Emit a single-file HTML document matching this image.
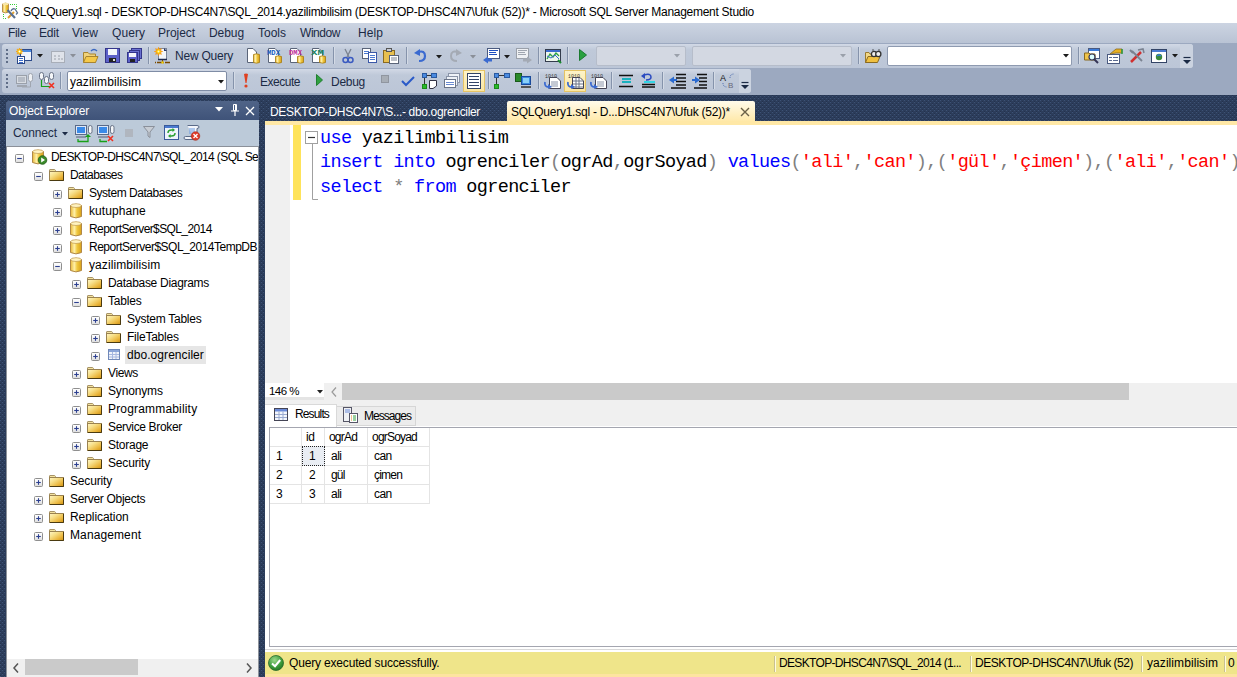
<!DOCTYPE html>
<html><head><meta charset="utf-8"><style>
*{margin:0;padding:0;box-sizing:border-box}
html,body{width:1237px;height:677px;overflow:hidden;background:#2b3b58;font-family:"Liberation Sans",sans-serif;font-size:12px;color:#000}
.a{position:absolute}
.t{position:absolute;white-space:pre;line-height:1.15}
svg{position:absolute;overflow:visible}
</style></head><body>
<svg width="0" height="0" style="position:absolute"><defs><linearGradient id="gfold" x1="0" y1="0" x2="1" y2="1"><stop offset="0" stop-color="#fff6c8"/><stop offset="0.35" stop-color="#f7df88"/><stop offset="0.7" stop-color="#ebb840"/><stop offset="1" stop-color="#cf9012"/></linearGradient><linearGradient id="gdb" x1="0" y1="0" x2="1" y2="0"><stop offset="0" stop-color="#e8b838"/><stop offset="0.35" stop-color="#fff0a8"/><stop offset="0.6" stop-color="#f0c840"/><stop offset="1" stop-color="#d8a018"/></linearGradient><linearGradient id="gbox" x1="0" y1="0" x2="0" y2="1"><stop offset="0" stop-color="#fff"/><stop offset="0.5" stop-color="#f4f4f4"/><stop offset="1" stop-color="#dadada"/></linearGradient><radialGradient id="gok" cx="0.4" cy="0.3" r="0.8"><stop offset="0" stop-color="#9ad88a"/><stop offset="0.6" stop-color="#3a9a3a"/><stop offset="1" stop-color="#1e6a1e"/></radialGradient></defs></svg>
<div class="a" style="left:0px;top:0px;width:1237px;height:23px;background:#fff"></div>
<svg style="left:0px;top:0px" width="20" height="20" viewBox="0 0 20 20"><path d="M10 4.5 H16.5 V10 M3.5 14 V18.5 H7" fill="none" stroke="#33cc33" stroke-width="1" stroke-dasharray="1 1"/><path d="M2.5 4 Q5.5 2.3 8.5 4 V12 Q5.5 13.7 2.5 12Z" fill="url(#gdb)" stroke="#b08848" stroke-width="0.9"/><ellipse cx="5.5" cy="4" rx="3" ry="1.2" fill="#f8e6a8"/><path d="M8 18 L14 12" stroke="#e0a030" stroke-width="2"/><path d="M7.5 10 L15 18" stroke="#5a7090" stroke-width="2.2"/><path d="M11 11 Q12 8 15 9 L17.5 13 L16 14.5" fill="none" stroke="#5a7090" stroke-width="1.3"/></svg>
<div class="t" style="left:23px;top:5.94px;font-size:12px;color:#000;letter-spacing:-0.275px;">SQLQuery1.sql - DESKTOP-DHSC4N7\SQL_2014.yazilimbilisim (DESKTOP-DHSC4N7\Ufuk (52))* - Microsoft SQL Server Management Studio</div>
<div class="a" style="left:0px;top:23px;width:1237px;height:20px;background:linear-gradient(#ccd4e2,#b9c3d4)"></div>
<div class="t" style="left:8px;top:26.94px;font-size:12px;color:#1b2a45;letter-spacing:-0.334px;">File</div>
<div class="t" style="left:39px;top:26.94px;font-size:12px;color:#1b2a45;letter-spacing:-0.169px;">Edit</div>
<div class="t" style="left:72px;top:26.94px;font-size:12px;color:#1b2a45;letter-spacing:0.052px;">View</div>
<div class="t" style="left:112px;top:26.94px;font-size:12px;color:#1b2a45;letter-spacing:0.065px;">Query</div>
<div class="t" style="left:158px;top:26.94px;font-size:12px;color:#1b2a45;letter-spacing:-0.049px;">Project</div>
<div class="t" style="left:209px;top:26.94px;font-size:12px;color:#1b2a45;letter-spacing:-0.072px;">Debug</div>
<div class="t" style="left:258px;top:26.94px;font-size:12px;color:#1b2a45;letter-spacing:-0.002px;">Tools</div>
<div class="t" style="left:300px;top:26.94px;font-size:12px;color:#1b2a45;letter-spacing:-0.446px;">Window</div>
<div class="t" style="left:358px;top:26.94px;font-size:12px;color:#1b2a45;letter-spacing:0.080px;">Help</div>
<div class="a" style="left:0px;top:43px;width:1237px;height:52px;background:#9ca9c0"></div>
<div class="a" style="left:2px;top:44px;width:1191px;height:24px;background:linear-gradient(#d2d9e6,#bfc9d9 25%,#bcc6d7);border-radius:3px"></div>
<div class="a" style="left:1180px;top:44px;width:13px;height:24px;background:#cbd3e0;border-radius:0 3px 3px 0"></div>
<div class="a" style="left:2px;top:69px;width:749px;height:24px;background:linear-gradient(#d2d9e6,#bfc9d9 25%,#bcc6d7);border-radius:3px"></div>
<div class="a" style="left:739px;top:69px;width:12px;height:24px;background:#cbd3e0;border-radius:0 3px 3px 0"></div>
<div class="a" style="left:6px;top:49px;width:2px;height:2px;background:#5f6d87"></div><div class="a" style="left:6px;top:53px;width:2px;height:2px;background:#5f6d87"></div><div class="a" style="left:6px;top:57px;width:2px;height:2px;background:#5f6d87"></div><div class="a" style="left:6px;top:61px;width:2px;height:2px;background:#5f6d87"></div>
<div class="a" style="left:6px;top:74px;width:2px;height:2px;background:#5f6d87"></div><div class="a" style="left:6px;top:78px;width:2px;height:2px;background:#5f6d87"></div><div class="a" style="left:6px;top:82px;width:2px;height:2px;background:#5f6d87"></div><div class="a" style="left:6px;top:86px;width:2px;height:2px;background:#5f6d87"></div>
<svg style="left:1183px;top:57px" width="8" height="8" viewBox="0 0 8 8"><path d="M0.5 0.5 H7.5" stroke="#1b2a45" stroke-width="1.2"/><path d="M0 3 H8 L4 7Z" fill="#1b2a45"/></svg>
<svg style="left:741px;top:82px" width="8" height="8" viewBox="0 0 8 8"><path d="M0.5 0.5 H7.5" stroke="#1b2a45" stroke-width="1.2"/><path d="M0 3 H8 L4 7Z" fill="#1b2a45"/></svg>
<svg style="left:16px;top:48px" width="17" height="17" viewBox="0 0 17 17"><rect x="4.5" y="1.5" width="11" height="11" fill="#eef3fb" stroke="#2c4a8a"/><rect x="5" y="2" width="10" height="2" fill="#4a8ae0"/><path d="M3.50 0.00 L4.11 2.02 L5.97 1.03 L4.98 2.89 L7.00 3.50 L4.98 4.11 L5.97 5.97 L4.11 4.98 L3.50 7.00 L2.89 4.98 L1.03 5.97 L2.02 4.11 L0.00 3.50 L2.02 2.89 L1.03 1.03 L2.89 2.02Z" fill="#ffd800" stroke="#f5a010" stroke-width="0.7"/><circle cx="3.5" cy="3.5" r="0.9" fill="#fff"/><rect x="1.5" y="8.5" width="7" height="7" fill="#fff" stroke="#2c4a8a"/><path d="M3 10.5 H7 M3 12.5 H7 M3 14.5 H7" stroke="#3a6ac8"/></svg><svg style="left:37px;top:54px" width="6" height="4" viewBox="0 0 6 4"><path d="M0 0 H6 L3 3.5Z" fill="#1b1b1b"/></svg><svg style="left:50px;top:48px" width="16" height="16" viewBox="0 0 16 16"><rect x="1.5" y="3.5" width="13" height="11" fill="#dfe3ea" stroke="#a8aeb8"/><path d="M4 8h2M8 8h2M4 11h2M8 11h2M11 11h2" stroke="#9aa0aa"/></svg><svg style="left:70px;top:54px" width="6" height="4" viewBox="0 0 6 4"><path d="M0 0 H6 L3 3.5Z" fill="#8a8f98"/></svg><svg style="left:82px;top:48px" width="17" height="16" viewBox="0 0 17 16"><path d="M1.5 4.5 H6 L7.5 6 H13.5 V14.5 H1.5Z" fill="#f0d27a" stroke="#a88430"/><path d="M1.5 14.5 L4 8.5 H16 L13.5 14.5Z" fill="#f5c94a" stroke="#a88430"/><path d="M9 3 Q12 0 15 3" fill="none" stroke="#3a68c0" stroke-width="1.3"/></svg><svg style="left:105px;top:48px" width="15" height="15" viewBox="0 0 15 15"><rect x="0.5" y="0.5" width="14" height="14" fill="#5c60c8" stroke="#34368a"/><rect x="3" y="1" width="9" height="6" fill="#f4f6fb"/><rect x="4" y="10" width="7" height="4" fill="#222"/><rect x="8" y="11" width="2" height="2" fill="#ddd"/></svg><svg style="left:127px;top:48px" width="15" height="15" viewBox="0 0 15 15"><rect x="4.5" y="0.5" width="10" height="10" fill="#6a70d0" stroke="#34368a"/><rect x="2.5" y="2.5" width="10" height="10" fill="#6a70d0" stroke="#34368a"/><rect x="0.5" y="4.5" width="10" height="10" fill="#5c60c8" stroke="#34368a"/><rect x="2" y="5" width="7" height="4" fill="#f4f6fb"/><rect x="3" y="11" width="5" height="3" fill="#222"/></svg><div class="a" style="left:148px;top:47px;width:1px;height:17px;background:#8593ab"></div><div class="a" style="left:149px;top:47px;width:1px;height:17px;background:#d4dbe6"></div><svg style="left:154px;top:47px" width="18" height="17" viewBox="0 0 18 17"><rect x="4.5" y="1.5" width="8" height="11" fill="#f4f6fa" stroke="#7a8498"/><path d="M4 12.5 H13" stroke="#1e2a50" stroke-width="1.5"/><path d="M10 1 L13 4 H10Z" fill="#2a3a68"/><path d="M4.50 0.50 L5.27 2.65 L7.33 1.67 L6.35 3.73 L8.50 4.50 L6.35 5.27 L7.33 7.33 L5.27 6.35 L4.50 8.50 L3.73 6.35 L1.67 7.33 L2.65 5.27 L0.50 4.50 L2.65 3.73 L1.67 1.67 L3.73 2.65Z" fill="#ffd000" stroke="#f59010" stroke-width="0.8"/><circle cx="4.5" cy="4.5" r="1" fill="#fff6c0"/><path d="M1 15.5 H17" stroke="#7a4a00" stroke-width="1.4" stroke-dasharray="1 1 5 1 1 1 5 1"/><path d="M8.5 13 V15" stroke="#7a4a00"/><circle cx="8.5" cy="15.5" r="1.2" fill="#f0d010"/></svg><div class="t" style="left:175px;top:50.44px;font-size:12px;color:#1b2a45;letter-spacing:-0.224px;">New Query</div><svg style="left:246px;top:48px" width="16" height="16" viewBox="0 0 16 16"><path d="M1.5 0.5 H7 L10.5 4 V14.5 H1.5Z" fill="#fff" stroke="#5a6478"/><path d="M7.5 6.5 Q10.5 5.2 13.5 6.5 V14.5 Q10.5 15.8 7.5 14.5Z" fill="url(#gdb)" stroke="#a57a10" stroke-width="0.8"/></svg><svg style="left:267px;top:48px" width="16" height="16" viewBox="0 0 16 16"><path d="M1.5 0.5 H8 L11.5 4 V14.5 H1.5Z" fill="#fff" stroke="#5a6478"/><text x="0" y="6.5" font-size="6.5" font-family="Liberation Mono" font-weight="bold" fill="#2060c0" textLength="13" lengthAdjust="spacingAndGlyphs">MDX</text><path d="M8.5 8.5 Q11.5 7.2 14.5 8.5 V14.5 Q11.5 15.8 8.5 14.5Z" fill="url(#gdb)" stroke="#a57a10" stroke-width="0.8"/></svg><svg style="left:289px;top:48px" width="16" height="16" viewBox="0 0 16 16"><path d="M1.5 0.5 H8 L11.5 4 V14.5 H1.5Z" fill="#fff" stroke="#5a6478"/><text x="0" y="6.5" font-size="6.5" font-family="Liberation Mono" font-weight="bold" fill="#c030a0" textLength="13" lengthAdjust="spacingAndGlyphs">DMX</text><path d="M8.5 8.5 Q11.5 7.2 14.5 8.5 V14.5 Q11.5 15.8 8.5 14.5Z" fill="url(#gdb)" stroke="#a57a10" stroke-width="0.8"/></svg><svg style="left:311px;top:48px" width="16" height="16" viewBox="0 0 16 16"><path d="M1.5 0.5 H8 L11.5 4 V14.5 H1.5Z" fill="#fff" stroke="#5a6478"/><text x="0" y="6.5" font-size="6.5" font-family="Liberation Mono" font-weight="bold" fill="#208060" textLength="13" lengthAdjust="spacingAndGlyphs">XM</text><path d="M8.5 8.5 Q11.5 7.2 14.5 8.5 V14.5 Q11.5 15.8 8.5 14.5Z" fill="url(#gdb)" stroke="#a57a10" stroke-width="0.8"/></svg><div class="a" style="left:333px;top:47px;width:1px;height:17px;background:#8593ab"></div><div class="a" style="left:334px;top:47px;width:1px;height:17px;background:#d4dbe6"></div><svg style="left:342px;top:48px" width="12" height="16" viewBox="0 0 12 16"><path d="M3 1 L7 9 M9 1 L5 9" stroke="#7a8290" stroke-width="1.3"/><circle cx="3.5" cy="12" r="2.5" fill="none" stroke="#3a5ac0" stroke-width="1.5"/><circle cx="8.5" cy="12" r="2.5" fill="none" stroke="#3a5ac0" stroke-width="1.5"/></svg><svg style="left:362px;top:48px" width="16" height="16" viewBox="0 0 16 16"><rect x="0.5" y="0.5" width="8" height="10" fill="#fff" stroke="#5a6478"/><path d="M2 3.5h5M2 5.5h4" stroke="#4a78d0"/><rect x="6.5" y="4.5" width="8" height="10" fill="#fff" stroke="#3a58a8"/><path d="M8 7.5h5M8 9.5h5M8 11.5h5" stroke="#4a78d0"/></svg><svg style="left:383px;top:48px" width="17" height="16" viewBox="0 0 17 16"><rect x="0.5" y="2.5" width="11" height="12" fill="#e8c050" stroke="#8a6a20"/><rect x="3.5" y="0.5" width="5" height="3" fill="#c8ccd4" stroke="#555"/><rect x="6.5" y="7.5" width="9" height="8" fill="#fff" stroke="#5a6478"/><path d="M8 10h6M8 12h6" stroke="#7a8290"/></svg><div class="a" style="left:406px;top:47px;width:1px;height:17px;background:#8593ab"></div><div class="a" style="left:407px;top:47px;width:1px;height:17px;background:#d4dbe6"></div><svg style="left:414px;top:49px" width="13" height="14" viewBox="0 0 13 14"><path d="M4 3 Q11 1 11 7 Q11 12 5 12" fill="none" stroke="#3a6ad0" stroke-width="2.2"/><path d="M0 4 L6 0 V7Z" fill="#3a6ad0"/></svg><svg style="left:436px;top:55px" width="6" height="4" viewBox="0 0 6 4"><path d="M0 0 H6 L3 3.5Z" fill="#1b1b1b"/></svg><svg style="left:449px;top:49px" width="13" height="14" viewBox="0 0 13 14"><path d="M9 3 Q2 1 2 7 Q2 12 8 12" fill="none" stroke="#a4aab4" stroke-width="2"/><path d="M13 4 L7 0 V7Z" fill="#a4aab4"/></svg><svg style="left:470px;top:55px" width="6" height="4" viewBox="0 0 6 4"><path d="M0 0 H6 L3 3.5Z" fill="#8a8f98"/></svg><svg style="left:483px;top:48px" width="17" height="16" viewBox="0 0 17 16"><rect x="4.5" y="0.5" width="12" height="10" fill="#fff" stroke="#4a5a80"/><path d="M6 2.5h9M6 4.5h7M6 6.5h8" stroke="#2050c0"/><path d="M0 12 L5 8.5 V10.5 H9 V13.5 H5 V15.5Z" fill="#3a6ad0"/></svg><svg style="left:504px;top:55px" width="6" height="4" viewBox="0 0 6 4"><path d="M0 0 H6 L3 3.5Z" fill="#1b1b1b"/></svg><svg style="left:516px;top:48px" width="17" height="16" viewBox="0 0 17 16"><rect x="0.5" y="0.5" width="12" height="10" fill="#eef0f3" stroke="#9aa0aa"/><path d="M2 2.5h9M2 4.5h7M2 6.5h8" stroke="#a0a6b0"/><path d="M16 12 L11 8.5 V10.5 H7 V13.5 H11 V15.5Z" fill="#a4aab4"/></svg><div class="a" style="left:538px;top:47px;width:1px;height:17px;background:#8593ab"></div><div class="a" style="left:539px;top:47px;width:1px;height:17px;background:#d4dbe6"></div><svg style="left:545px;top:48px" width="17" height="16" viewBox="0 0 17 16"><rect x="0.5" y="1.5" width="15" height="12" fill="#eef6ee" stroke="#333c4c"/><path d="M1 3h14" stroke="#3a6ad0" stroke-width="2"/><path d="M2 11 L5 6 L8 9 L11 5 L14 8" fill="none" stroke="#2aa040" stroke-width="1.3"/><path d="M2 8 L6 10 L10 7 L14 11" fill="none" stroke="#3a6ad0"/><path d="M13 12 L16 15" stroke="#1a8a30" stroke-width="2"/></svg><div class="a" style="left:567px;top:47px;width:1px;height:17px;background:#8593ab"></div><div class="a" style="left:568px;top:47px;width:1px;height:17px;background:#d4dbe6"></div><svg style="left:579px;top:49px" width="8" height="12" viewBox="0 0 8 12"><path d="M0.5 0.5 L7.5 6 L0.5 11.5Z" fill="#2aa040" stroke="#1a7a30"/></svg>
<div class="a" style="left:596px;top:46px;width:90px;height:20px;background:#d3d8e2;border:1px solid #b6bdca;border-radius:2px"></div>
<svg style="left:674px;top:54px" width="6" height="4" viewBox="0 0 6 4"><path d="M0 0 H6 L3 3.5Z" fill="#9aa0aa"/></svg>
<div class="a" style="left:692px;top:46px;width:160px;height:20px;background:#d3d8e2;border:1px solid #b6bdca;border-radius:2px"></div>
<svg style="left:840px;top:54px" width="6" height="4" viewBox="0 0 6 4"><path d="M0 0 H6 L3 3.5Z" fill="#9aa0aa"/></svg>
<div class="a" style="left:858px;top:47px;width:1px;height:17px;background:#8593ab"></div><div class="a" style="left:859px;top:47px;width:1px;height:17px;background:#d4dbe6"></div>
<svg style="left:865px;top:48px" width="16" height="16" viewBox="0 0 16 16"><path d="M0.5 4.5 H4 L5 6 H9 V14.5 H0.5Z" fill="#f2d888" stroke="#9a7a30"/><path d="M0.5 14.5 L3 8.5 H15 L12.5 14.5Z" fill="#f0c040" stroke="#8a6a20"/><circle cx="9" cy="6" r="2.6" fill="#eee" stroke="#333" stroke-width="1.3"/><circle cx="13.3" cy="6" r="2.6" fill="#eee" stroke="#333" stroke-width="1.3"/><path d="M8 2.5 V1.5 M14 2.5 V1.5" stroke="#333" stroke-width="1.5"/></svg>
<div class="a" style="left:887px;top:46px;width:185px;height:20px;background:#fff;border:1px solid #8e9ab0;border-radius:2px"></div>
<svg style="left:1063px;top:54px" width="6" height="4" viewBox="0 0 6 4"><path d="M0 0 H6 L3 3.5Z" fill="#1b1b1b"/></svg>
<div class="a" style="left:1078px;top:47px;width:1px;height:17px;background:#8593ab"></div><div class="a" style="left:1079px;top:47px;width:1px;height:17px;background:#d4dbe6"></div>
<svg style="left:1084px;top:48px" width="17" height="16" viewBox="0 0 17 16"><rect x="4.5" y="0.5" width="11" height="10" fill="#fff" stroke="#4a5a80"/><rect x="5" y="1" width="10" height="2" fill="#3a7ad8"/><path d="M0.5 5 H5 L6 6 H11 V12 H0.5Z" fill="#f0c44a" stroke="#8a6a20"/><circle cx="8" cy="9" r="3" fill="#dff" stroke="#335" stroke-width="1.2"/><path d="M10 11 L14 15" stroke="#335" stroke-width="2"/></svg>
<svg style="left:1107px;top:48px" width="16" height="16" viewBox="0 0 16 16"><rect x="0.5" y="6.5" width="12" height="9" fill="#fff" stroke="#4a5a80"/><path d="M2 9.5h3M6 9.5h5M2 12.5h3M6 12.5h5" stroke="#5a6a90"/><path d="M3 6 L9 1 H15 V5 H9Z" fill="#e8b020" stroke="#8a6a20" stroke-width="0.8"/><path d="M15 1 V6" stroke="#2a9a40" stroke-width="1.5"/></svg>
<svg style="left:1129px;top:48px" width="16" height="16" viewBox="0 0 16 16"><path d="M2 14 L12 4" stroke="#d03030" stroke-width="2.5"/><path d="M3 3 L13 13" stroke="#7a8290" stroke-width="1.8"/><path d="M9 2 L14 1 L15 5" fill="none" stroke="#7a8290" stroke-width="1.5"/><path d="M1 2 L4 5" stroke="#7a8290" stroke-width="2"/></svg>
<svg style="left:1151px;top:48px" width="16" height="16" viewBox="0 0 16 16"><rect x="0.5" y="1.5" width="15" height="13" fill="#fff" stroke="#334466"/><rect x="1" y="2" width="14" height="2" fill="#4a7ad0"/><circle cx="8" cy="9" r="3.2" fill="#3a8a3a"/><path d="M6 8 Q8 6 10 8" stroke="#3a7ad8" stroke-width="1.5" fill="none"/></svg>
<svg style="left:1172px;top:54px" width="6" height="4" viewBox="0 0 6 4"><path d="M0 0 H6 L3 3.5Z" fill="#1b1b1b"/></svg>
<svg style="left:16px;top:73px" width="17" height="16" viewBox="0 0 17 16"><rect x="0.5" y="2.5" width="10" height="8" fill="#d8dce2" stroke="#9aa0aa"/><rect x="2" y="4" width="7" height="5" fill="#b6bcc6"/><path d="M1 13 H11" stroke="#a0a6b0" stroke-width="2"/><rect x="12.5" y="0.5" width="4" height="8" rx="2" fill="#eef0f3" stroke="#a0a6b0"/><path d="M14.5 9 V14 H6" fill="none" stroke="#a0a6b0"/></svg><svg style="left:38px;top:72px" width="17" height="18" viewBox="0 0 17 18"><rect x="1.5" y="0.5" width="4" height="7" rx="2" fill="#f4f6f8" stroke="#6a7488"/><rect x="6.5" y="4.5" width="4" height="7" rx="2" fill="#f4f6f8" stroke="#6a7488"/><rect x="11.5" y="0.5" width="4" height="7" rx="2" fill="#f4f6f8" stroke="#6a7488"/><path d="M3.5 8 V14.5 H12" fill="none" stroke="#18a018" stroke-width="1.2"/><path d="M11 11 L16 16 M16 11 L11 16" stroke="#f03020" stroke-width="1.6"/></svg><div class="a" style="left:60px;top:72px;width:1px;height:17px;background:#8593ab"></div><div class="a" style="left:61px;top:72px;width:1px;height:17px;background:#d4dbe6"></div><div class="a" style="left:67px;top:71px;width:160px;height:20px;background:#fff;border:1px solid #7f8ca5;border-radius:2px"></div><div class="t" style="left:70px;top:75.94px;font-size:12px;color:#000;letter-spacing:0.071px;">yazilimbilisim</div><svg style="left:218px;top:80px" width="6" height="4" viewBox="0 0 6 4"><path d="M0 0 H6 L3 3.5Z" fill="#1b1b1b"/></svg><div class="a" style="left:233px;top:72px;width:1px;height:17px;background:#8593ab"></div><div class="a" style="left:234px;top:72px;width:1px;height:17px;background:#d4dbe6"></div><svg style="left:243px;top:73px" width="6" height="15" viewBox="0 0 6 15"><path d="M1 1 Q3 0 5 1 L3.5 10 H2.5Z" fill="#e04020"/><circle cx="3" cy="13" r="1.6" fill="#e04020"/></svg><div class="t" style="left:260px;top:75.94px;font-size:12px;color:#1b2a45;letter-spacing:-0.480px;">Execute</div><svg style="left:316px;top:74px" width="7" height="12" viewBox="0 0 7 12"><path d="M0.5 0.5 L6.5 6 L0.5 11.5Z" fill="#30a040" stroke="#208030"/></svg><div class="t" style="left:331px;top:75.94px;font-size:12px;color:#1b2a45;letter-spacing:-0.272px;">Debug</div><svg style="left:381px;top:75px" width="8" height="8" viewBox="0 0 8 8"><rect x="0.5" y="0.5" width="7" height="7" fill="#a8aeb6" stroke="#9096a0"/></svg><svg style="left:401px;top:76px" width="14" height="11" viewBox="0 0 14 11"><path d="M1 5 L5 9 L13 1" fill="none" stroke="#2a5ac8" stroke-width="2"/></svg><svg style="left:422px;top:73px" width="15" height="16" viewBox="0 0 15 16"><rect x="0.5" y="0.5" width="4" height="4" fill="#4a8ae0" stroke="#2a5aa0"/><rect x="9.5" y="0.5" width="5" height="4" fill="#4a8ae0" stroke="#2a5aa0"/><rect x="0.5" y="11.5" width="4" height="4" fill="#2aba2a" stroke="#1a8a1a"/><path d="M2.5 5 V11 M5 2.5 H9" stroke="#333"/><path d="M7.5 7.5 H14.5 V13 L11 15.5 H7.5Z" fill="#fff" stroke="#334"/></svg><svg style="left:444px;top:73px" width="16" height="16" viewBox="0 0 16 16"><rect x="4.5" y="0.5" width="11" height="9" fill="#eef2f8" stroke="#8a94a8"/><rect x="2.5" y="3.5" width="11" height="9" fill="#eef2f8" stroke="#8a94a8"/><rect x="0.5" y="6.5" width="11" height="8" fill="#fff" stroke="#6a7488"/><path d="M2 9.5h8M2 11.5h8" stroke="#6a8ad0"/></svg><div class="a" style="left:463px;top:70px;width:22px;height:22px;background:linear-gradient(#fdf3c8,#fbe6a2);border:1px solid #e5c365"></div><svg style="left:467px;top:73px" width="14" height="16" viewBox="0 0 14 16"><rect x="0.5" y="0.5" width="13" height="15" fill="#fff" stroke="#334466"/><path d="M2 3.5h10M2 6.5h10M2 9.5h10M2 12.5h10" stroke="#334466"/></svg><div class="a" style="left:488px;top:72px;width:1px;height:17px;background:#8593ab"></div><div class="a" style="left:489px;top:72px;width:1px;height:17px;background:#d4dbe6"></div><svg style="left:494px;top:73px" width="17" height="16" viewBox="0 0 17 16"><rect x="0.5" y="0.5" width="4" height="4" fill="#4a8ae0" stroke="#2a5aa0"/><rect x="10.5" y="0.5" width="5" height="4" fill="#4a8ae0" stroke="#2a5aa0"/><rect x="0.5" y="11.5" width="4" height="4" fill="#2aba2a" stroke="#1a8a1a"/><path d="M2.5 5 V11 M5 2.5 H10" stroke="#333"/></svg><svg style="left:515px;top:73px" width="17" height="16" viewBox="0 0 17 16"><rect x="0.5" y="0.5" width="6" height="8" fill="#2a8a2a" stroke="#1a5a1a"/><rect x="6.5" y="3.5" width="9" height="8" fill="#3a8ae0" stroke="#1a4a9a"/><rect x="8" y="5" width="6" height="5" fill="#8ad0f8"/><path d="M6 14 H16" stroke="#555" stroke-width="2"/></svg><div class="a" style="left:538px;top:72px;width:1px;height:17px;background:#8593ab"></div><div class="a" style="left:539px;top:72px;width:1px;height:17px;background:#d4dbe6"></div><svg style="left:544px;top:73px" width="17" height="16" viewBox="0 0 17 16"><text x="1" y="5" font-size="5" font-family="Liberation Mono" fill="#333">1010</text><path d="M5.5 4.5 H13 L16.5 8 V15.5 H5.5Z" fill="#fff" stroke="#445"/><path d="M7 9h7M7 11h7M7 13h7" stroke="#8a94a8"/><path d="M1 9 Q0 14 5 14" fill="none" stroke="#3a6ad0" stroke-width="1.8"/><path d="M4 11 L8 14 L4 16Z" fill="#3a6ad0"/></svg><div class="a" style="left:564px;top:70px;width:22px;height:22px;background:linear-gradient(#fdf3c8,#fbe6a2);border:1px solid #e5c365"></div><svg style="left:567px;top:73px" width="17" height="16" viewBox="0 0 17 16"><text x="1" y="5" font-size="5" font-family="Liberation Mono" fill="#333">1010</text><path d="M5.5 4.5 H13 L16.5 8 V15.5 H5.5Z" fill="#fff" stroke="#445"/><path d="M6 8h10M6 11h10M6 14h10M9 5v10M12 5v10" stroke="#6a7488"/><path d="M1 9 Q0 14 5 14" fill="none" stroke="#3a6ad0" stroke-width="1.8"/><path d="M4 11 L8 14 L4 16Z" fill="#3a6ad0"/></svg><svg style="left:590px;top:73px" width="17" height="16" viewBox="0 0 17 16"><text x="1" y="5" font-size="5" font-family="Liberation Mono" fill="#333">1010</text><path d="M5.5 4.5 H13 L16.5 8 V15.5 H5.5Z" fill="#fff" stroke="#445"/><path d="M7 9h7M7 11h7M7 13h7" stroke="#8a94a8"/><path d="M1 9 Q0 14 5 14" fill="none" stroke="#3a6ad0" stroke-width="1.8"/><path d="M4 11 L8 14 L4 16Z" fill="#3a6ad0"/></svg><div class="a" style="left:611px;top:72px;width:1px;height:17px;background:#8593ab"></div><div class="a" style="left:612px;top:72px;width:1px;height:17px;background:#d4dbe6"></div><svg style="left:618px;top:74px" width="16" height="14" viewBox="0 0 16 14"><path d="M1 1.5 H15 M4 5 H13 M4 8 H13 M1 12.5 H15" stroke="#111" stroke-width="1.6"/><path d="M4 5 H13 M4 8 H13" stroke="#10d8e8" stroke-width="1.6"/></svg><svg style="left:641px;top:73px" width="15" height="15" viewBox="0 0 15 15"><path d="M3 2 Q10 0 10 4 Q10 7 5 7" fill="none" stroke="#2a4ac0" stroke-width="1.5"/><path d="M0 3 L4 0 V6Z" fill="#2a4ac0"/><path d="M3 9 H14" stroke="#10d8e8" stroke-width="1.6"/><path d="M1 11.5 H14 M1 14 H14" stroke="#111" stroke-width="1.6"/></svg><div class="a" style="left:662px;top:72px;width:1px;height:17px;background:#8593ab"></div><div class="a" style="left:663px;top:72px;width:1px;height:17px;background:#d4dbe6"></div><svg style="left:669px;top:73px" width="18" height="16" viewBox="0 0 18 16"><path d="M7 1.5 H17 M7 5 H17 M7 8.5 H17 M7 12 H17 M2 15 H17" stroke="#111" stroke-width="1.5"/><path d="M0 7 L5 3.5 V10.5Z" fill="#2a6ad0"/><path d="M3 7 H8" stroke="#2a6ad0" stroke-width="2"/></svg><svg style="left:692px;top:73px" width="16" height="16" viewBox="0 0 16 16"><path d="M5 1.5 H15 M7 5 H15 M7 8.5 H15 M7 12 H15 M2 15 H15" stroke="#111" stroke-width="1.5"/><path d="M8 7 L3 3.5 V10.5Z" fill="#2a6ad0"/><path d="M0 7 H5" stroke="#2a6ad0" stroke-width="2"/></svg><div class="a" style="left:713px;top:72px;width:1px;height:17px;background:#8593ab"></div><div class="a" style="left:714px;top:72px;width:1px;height:17px;background:#d4dbe6"></div><svg style="left:720px;top:73px" width="16" height="16" viewBox="0 0 16 16"><text x="0" y="8" font-size="9" font-family="Liberation Sans" fill="#111">A</text><text x="8" y="15" font-size="8" font-family="Liberation Sans" fill="#667">B</text><path d="M3 10 Q3 14 7 14 M10 5 Q10 1 14 1" fill="none" stroke="#4a6ab0" stroke-dasharray="1 1"/></svg>
<div class="a" style="left:0px;top:95px;width:1237px;height:582px;background-color:#2c3d5b;background-image:conic-gradient(at 1px 1px,transparent 75%,#3d5275 0),conic-gradient(at 1px 1px,transparent 75%,#3d5275 0),conic-gradient(at 1px 1px,transparent 75%,#24324e 0),conic-gradient(at 1px 1px,transparent 75%,#24324e 0);background-size:4px 4px;background-position:0 1px,2px 3px,2px 2px,0 0"></div>
<div class="a" style="left:6px;top:101px;width:253px;height:19px;background:linear-gradient(#506488,#3f5379);border-radius:3px 3px 0 0"></div>
<div class="t" style="left:9px;top:105.44px;font-size:12px;color:#fff;letter-spacing:-0.180px;">Object Explorer</div>
<svg style="left:215px;top:107px" width="8" height="5" viewBox="0 0 8 5"><path d="M0 0 H8 L4 4.5Z" fill="#fff"/></svg>
<svg style="left:231px;top:104px" width="8" height="12" viewBox="0 0 8 12"><path d="M2.5 0.5 H5.5 V6.5 H2.5Z" fill="none" stroke="#fff"/><path d="M0 7 H8 M4 7 V12" stroke="#fff" stroke-width="1.2"/><path d="M4.5 1 V6" stroke="#fff"/></svg>
<svg style="left:245px;top:106px" width="10" height="10" viewBox="0 0 10 10"><path d="M1 1 L9 9 M9 1 L1 9" stroke="#fff" stroke-width="1.3"/></svg>
<div class="a" style="left:6px;top:120px;width:253px;height:26px;background:#bccad9"></div>
<div class="a" style="left:6px;top:146px;width:253px;height:1px;background:#8b9099"></div>
<div class="t" style="left:13px;top:126.94px;font-size:12px;color:#1b2a45;letter-spacing:-0.099px;">Connect</div>
<svg style="left:62px;top:132px" width="6" height="4" viewBox="0 0 6 4"><path d="M0 0 H6 L3 3.5Z" fill="#1b2a45"/></svg>
<svg style="left:75px;top:125px" width="17" height="17" viewBox="0 0 17 17"><rect x="0.5" y="0.5" width="11" height="9" fill="#dfe8f8" stroke="#5a6a88"/><rect x="2" y="2" width="8" height="6" fill="#3a8ae8"/><path d="M1 12 H11" stroke="#8a94a8" stroke-width="2"/><rect x="13.5" y="0.5" width="3.5" height="8" rx="1.7" fill="#f4f6f8" stroke="#6a7488"/><path d="M3 14 V16.5 H13 V11" fill="none" stroke="#18a018" stroke-width="1.3"/><path d="M10 12 L13 9 L16 12Z" fill="#18a018"/></svg>
<svg style="left:97px;top:125px" width="17" height="17" viewBox="0 0 17 17"><rect x="0.5" y="0.5" width="11" height="9" fill="#dfe8f8" stroke="#5a6a88"/><rect x="2" y="2" width="8" height="6" fill="#3a8ae8"/><path d="M1 12 H11" stroke="#8a94a8" stroke-width="2"/><rect x="13.5" y="0.5" width="3.5" height="8" rx="1.7" fill="#f4f6f8" stroke="#6a7488"/><path d="M3 14 V16.5 H10" fill="none" stroke="#18a018" stroke-width="1.3"/><path d="M11 11 L16 16 M16 11 L11 16" stroke="#f03020" stroke-width="1.6"/></svg>
<svg style="left:125px;top:129px" width="8" height="8" viewBox="0 0 8 8"><rect x="0" y="0" width="8" height="8" fill="#b0b6bf"/></svg>
<svg style="left:143px;top:126px" width="12" height="12" viewBox="0 0 12 12"><path d="M0.5 0.5 H11.5 L7 6 V11.5 L5 10 V6Z" fill="#c8cdd4" stroke="#8a909a"/></svg>
<svg style="left:164px;top:125px" width="15" height="15" viewBox="0 0 15 15"><rect x="0.5" y="0.5" width="14" height="14" fill="#eef4fb" stroke="#3a5a9a"/><rect x="1" y="1" width="13" height="2" fill="#4a7ad0"/><path d="M4 8 Q4 5 7.5 5 L9 5 M11 8 Q11 11 7.5 11 L6 11" fill="none" stroke="#2aa030" stroke-width="1.5"/><path d="M8.5 3 L11 5 L8.5 7Z M6.5 9 L4 11 L6.5 13Z" fill="#2aa030"/></svg>
<svg style="left:184px;top:124px" width="17" height="17" viewBox="0 0 17 17"><path d="M3.5 1.5 H13 Q15 1.5 15 3 Q15 4.5 13 4.5 V12.5 H1.5 Q0 12.5 0 14 Q0 15.5 2 15.5 H10" fill="#f4f6fb" stroke="#5a6a88"/><path d="M5 5h6M5 7h6M5 9h5" stroke="#6a9ae0"/><circle cx="11.5" cy="12" r="4.3" fill="#e03a2a" stroke="#a02a1a" stroke-width="0.6"/><path d="M9.5 10 L13.5 14 M13.5 10 L9.5 14" stroke="#fff" stroke-width="1.3"/></svg>
<div class="a" style="left:6px;top:147px;width:253px;height:512px;background:#fff"></div>
<svg style="left:15px;top:154px" width="9" height="9" viewBox="0 0 9 9"><rect x="0.5" y="0.5" width="8" height="8" rx="1" fill="url(#gbox)" stroke="#8f8f8f" stroke-width="1"/><path d="M2.2 4.5 H6.8" stroke="#2c3f90" stroke-width="1.1"/></svg><svg style="left:32px;top:149px" width="15" height="16" viewBox="0 0 15 16"><path d="M0.5 2.5 Q6 0 11.5 2.5 V13.5 Q6 16.3 0.5 13.5Z" fill="url(#gdb)" stroke="#b08848" stroke-width="1"/><ellipse cx="6" cy="2.6" rx="5.2" ry="1.9" fill="#fff3c0" stroke="#c09a50" stroke-width="0.7"/><circle cx="10.5" cy="11" r="4.3" fill="#3a8a2a" stroke="#1e5a14" stroke-width="0.8"/><path d="M9.2 8.6 L13 11 L9.2 13.4Z" fill="#fff"/></svg><div class="t" style="left:51px;top:150.94px;font-size:12px;color:#000;letter-spacing:-0.613px;">DESKTOP-DHSC4N7\SQL_2014 (SQL Server 12.0.2000 - DESKTOP-DHSC4N7\Ufuk)</div><svg style="left:34px;top:172px" width="9" height="9" viewBox="0 0 9 9"><rect x="0.5" y="0.5" width="8" height="8" rx="1" fill="url(#gbox)" stroke="#8f8f8f" stroke-width="1"/><path d="M2.2 4.5 H6.8" stroke="#2c3f90" stroke-width="1.1"/></svg><svg style="left:49px;top:169px" width="15" height="12" viewBox="0 0 15 12"><path d="M0.5 2.5 V1 Q0.5 0.5 1 0.5 H5.5 Q6 0.5 6.5 1.5 L7 2.5Z" fill="#f3e3a0" stroke="#a89468" stroke-width="1"/><rect x="0.5" y="2.5" width="14" height="9" fill="url(#gfold)" stroke="#9a8250" stroke-width="1"/><path d="M14.5 3 V11.5 H1" fill="none" stroke="#4a3a10" stroke-width="1"/></svg><div class="t" style="left:70px;top:168.94px;font-size:12px;color:#000;letter-spacing:-0.552px;">Databases</div><svg style="left:53px;top:190px" width="9" height="9" viewBox="0 0 9 9"><rect x="0.5" y="0.5" width="8" height="8" rx="1" fill="url(#gbox)" stroke="#8f8f8f" stroke-width="1"/><path d="M2.2 4.5 H6.8" stroke="#2c3f90" stroke-width="1.1"/><path d="M4.5 2.2 V6.8" stroke="#2c3f90" stroke-width="1.1"/></svg><svg style="left:68px;top:187px" width="15" height="12" viewBox="0 0 15 12"><path d="M0.5 2.5 V1 Q0.5 0.5 1 0.5 H5.5 Q6 0.5 6.5 1.5 L7 2.5Z" fill="#f3e3a0" stroke="#a89468" stroke-width="1"/><rect x="0.5" y="2.5" width="14" height="9" fill="url(#gfold)" stroke="#9a8250" stroke-width="1"/><path d="M14.5 3 V11.5 H1" fill="none" stroke="#4a3a10" stroke-width="1"/></svg><div class="t" style="left:89px;top:186.94px;font-size:12px;color:#000;letter-spacing:-0.469px;">System Databases</div><svg style="left:53px;top:208px" width="9" height="9" viewBox="0 0 9 9"><rect x="0.5" y="0.5" width="8" height="8" rx="1" fill="url(#gbox)" stroke="#8f8f8f" stroke-width="1"/><path d="M2.2 4.5 H6.8" stroke="#2c3f90" stroke-width="1.1"/><path d="M4.5 2.2 V6.8" stroke="#2c3f90" stroke-width="1.1"/></svg><svg style="left:70px;top:203px" width="12" height="16" viewBox="0 0 12 16"><path d="M0.5 2.5 Q6 0 11.5 2.5 V13.5 Q6 16.3 0.5 13.5Z" fill="url(#gdb)" stroke="#b08848" stroke-width="1"/><ellipse cx="6" cy="2.6" rx="5.2" ry="1.9" fill="#fff3c0" stroke="#c09a50" stroke-width="0.7"/></svg><div class="t" style="left:89px;top:204.94px;font-size:12px;color:#000;letter-spacing:0.073px;">kutuphane</div><svg style="left:53px;top:226px" width="9" height="9" viewBox="0 0 9 9"><rect x="0.5" y="0.5" width="8" height="8" rx="1" fill="url(#gbox)" stroke="#8f8f8f" stroke-width="1"/><path d="M2.2 4.5 H6.8" stroke="#2c3f90" stroke-width="1.1"/><path d="M4.5 2.2 V6.8" stroke="#2c3f90" stroke-width="1.1"/></svg><svg style="left:70px;top:221px" width="12" height="16" viewBox="0 0 12 16"><path d="M0.5 2.5 Q6 0 11.5 2.5 V13.5 Q6 16.3 0.5 13.5Z" fill="url(#gdb)" stroke="#b08848" stroke-width="1"/><ellipse cx="6" cy="2.6" rx="5.2" ry="1.9" fill="#fff3c0" stroke="#c09a50" stroke-width="0.7"/></svg><div class="t" style="left:89px;top:222.94px;font-size:12px;color:#000;letter-spacing:-0.605px;">ReportServer$SQL_2014</div><svg style="left:53px;top:244px" width="9" height="9" viewBox="0 0 9 9"><rect x="0.5" y="0.5" width="8" height="8" rx="1" fill="url(#gbox)" stroke="#8f8f8f" stroke-width="1"/><path d="M2.2 4.5 H6.8" stroke="#2c3f90" stroke-width="1.1"/><path d="M4.5 2.2 V6.8" stroke="#2c3f90" stroke-width="1.1"/></svg><svg style="left:70px;top:239px" width="12" height="16" viewBox="0 0 12 16"><path d="M0.5 2.5 Q6 0 11.5 2.5 V13.5 Q6 16.3 0.5 13.5Z" fill="url(#gdb)" stroke="#b08848" stroke-width="1"/><ellipse cx="6" cy="2.6" rx="5.2" ry="1.9" fill="#fff3c0" stroke="#c09a50" stroke-width="0.7"/></svg><div class="t" style="left:89px;top:240.94px;font-size:12px;color:#000;letter-spacing:-0.497px;">ReportServer$SQL_2014TempDB</div><svg style="left:53px;top:262px" width="9" height="9" viewBox="0 0 9 9"><rect x="0.5" y="0.5" width="8" height="8" rx="1" fill="url(#gbox)" stroke="#8f8f8f" stroke-width="1"/><path d="M2.2 4.5 H6.8" stroke="#2c3f90" stroke-width="1.1"/></svg><svg style="left:70px;top:257px" width="12" height="16" viewBox="0 0 12 16"><path d="M0.5 2.5 Q6 0 11.5 2.5 V13.5 Q6 16.3 0.5 13.5Z" fill="url(#gdb)" stroke="#b08848" stroke-width="1"/><ellipse cx="6" cy="2.6" rx="5.2" ry="1.9" fill="#fff3c0" stroke="#c09a50" stroke-width="0.7"/></svg><div class="t" style="left:89px;top:258.94px;font-size:12px;color:#000;letter-spacing:0.093px;">yazilimbilisim</div><svg style="left:72px;top:280px" width="9" height="9" viewBox="0 0 9 9"><rect x="0.5" y="0.5" width="8" height="8" rx="1" fill="url(#gbox)" stroke="#8f8f8f" stroke-width="1"/><path d="M2.2 4.5 H6.8" stroke="#2c3f90" stroke-width="1.1"/><path d="M4.5 2.2 V6.8" stroke="#2c3f90" stroke-width="1.1"/></svg><svg style="left:87px;top:277px" width="15" height="12" viewBox="0 0 15 12"><path d="M0.5 2.5 V1 Q0.5 0.5 1 0.5 H5.5 Q6 0.5 6.5 1.5 L7 2.5Z" fill="#f3e3a0" stroke="#a89468" stroke-width="1"/><rect x="0.5" y="2.5" width="14" height="9" fill="url(#gfold)" stroke="#9a8250" stroke-width="1"/><path d="M14.5 3 V11.5 H1" fill="none" stroke="#4a3a10" stroke-width="1"/></svg><div class="t" style="left:108px;top:276.94px;font-size:12px;color:#000;letter-spacing:-0.297px;">Database Diagrams</div><svg style="left:72px;top:298px" width="9" height="9" viewBox="0 0 9 9"><rect x="0.5" y="0.5" width="8" height="8" rx="1" fill="url(#gbox)" stroke="#8f8f8f" stroke-width="1"/><path d="M2.2 4.5 H6.8" stroke="#2c3f90" stroke-width="1.1"/></svg><svg style="left:87px;top:295px" width="15" height="12" viewBox="0 0 15 12"><path d="M0.5 2.5 V1 Q0.5 0.5 1 0.5 H5.5 Q6 0.5 6.5 1.5 L7 2.5Z" fill="#f3e3a0" stroke="#a89468" stroke-width="1"/><rect x="0.5" y="2.5" width="14" height="9" fill="url(#gfold)" stroke="#9a8250" stroke-width="1"/><path d="M14.5 3 V11.5 H1" fill="none" stroke="#4a3a10" stroke-width="1"/></svg><div class="t" style="left:108px;top:294.94px;font-size:12px;color:#000;letter-spacing:-0.164px;">Tables</div><svg style="left:91px;top:316px" width="9" height="9" viewBox="0 0 9 9"><rect x="0.5" y="0.5" width="8" height="8" rx="1" fill="url(#gbox)" stroke="#8f8f8f" stroke-width="1"/><path d="M2.2 4.5 H6.8" stroke="#2c3f90" stroke-width="1.1"/><path d="M4.5 2.2 V6.8" stroke="#2c3f90" stroke-width="1.1"/></svg><svg style="left:106px;top:313px" width="15" height="12" viewBox="0 0 15 12"><path d="M0.5 2.5 V1 Q0.5 0.5 1 0.5 H5.5 Q6 0.5 6.5 1.5 L7 2.5Z" fill="#f3e3a0" stroke="#a89468" stroke-width="1"/><rect x="0.5" y="2.5" width="14" height="9" fill="url(#gfold)" stroke="#9a8250" stroke-width="1"/><path d="M14.5 3 V11.5 H1" fill="none" stroke="#4a3a10" stroke-width="1"/></svg><div class="t" style="left:127px;top:312.94px;font-size:12px;color:#000;letter-spacing:-0.262px;">System Tables</div><svg style="left:91px;top:334px" width="9" height="9" viewBox="0 0 9 9"><rect x="0.5" y="0.5" width="8" height="8" rx="1" fill="url(#gbox)" stroke="#8f8f8f" stroke-width="1"/><path d="M2.2 4.5 H6.8" stroke="#2c3f90" stroke-width="1.1"/><path d="M4.5 2.2 V6.8" stroke="#2c3f90" stroke-width="1.1"/></svg><svg style="left:106px;top:331px" width="15" height="12" viewBox="0 0 15 12"><path d="M0.5 2.5 V1 Q0.5 0.5 1 0.5 H5.5 Q6 0.5 6.5 1.5 L7 2.5Z" fill="#f3e3a0" stroke="#a89468" stroke-width="1"/><rect x="0.5" y="2.5" width="14" height="9" fill="url(#gfold)" stroke="#9a8250" stroke-width="1"/><path d="M14.5 3 V11.5 H1" fill="none" stroke="#4a3a10" stroke-width="1"/></svg><div class="t" style="left:127px;top:330.94px;font-size:12px;color:#000;letter-spacing:-0.232px;">FileTables</div><svg style="left:91px;top:352px" width="9" height="9" viewBox="0 0 9 9"><rect x="0.5" y="0.5" width="8" height="8" rx="1" fill="url(#gbox)" stroke="#8f8f8f" stroke-width="1"/><path d="M2.2 4.5 H6.8" stroke="#2c3f90" stroke-width="1.1"/><path d="M4.5 2.2 V6.8" stroke="#2c3f90" stroke-width="1.1"/></svg><svg style="left:108px;top:349px" width="12" height="11" viewBox="0 0 12 11"><rect x="0.5" y="0.5" width="11" height="10" fill="#f0f3fa" stroke="#7088b8" stroke-width="1"/><rect x="1" y="1" width="10" height="2" fill="#8aa4d8"/><path d="M1 5.5 H11 M1 8 H11 M4.5 3 V10 M8 3 V10" stroke="#a8b8e0" stroke-width="1"/></svg><div class="a" style="left:125px;top:346px;width:81px;height:18px;background:#e6e6e6"></div><div class="t" style="left:127px;top:348.94px;font-size:12px;color:#000;letter-spacing:0.061px;">dbo.ogrenciler</div><svg style="left:72px;top:370px" width="9" height="9" viewBox="0 0 9 9"><rect x="0.5" y="0.5" width="8" height="8" rx="1" fill="url(#gbox)" stroke="#8f8f8f" stroke-width="1"/><path d="M2.2 4.5 H6.8" stroke="#2c3f90" stroke-width="1.1"/><path d="M4.5 2.2 V6.8" stroke="#2c3f90" stroke-width="1.1"/></svg><svg style="left:87px;top:367px" width="15" height="12" viewBox="0 0 15 12"><path d="M0.5 2.5 V1 Q0.5 0.5 1 0.5 H5.5 Q6 0.5 6.5 1.5 L7 2.5Z" fill="#f3e3a0" stroke="#a89468" stroke-width="1"/><rect x="0.5" y="2.5" width="14" height="9" fill="url(#gfold)" stroke="#9a8250" stroke-width="1"/><path d="M14.5 3 V11.5 H1" fill="none" stroke="#4a3a10" stroke-width="1"/></svg><div class="t" style="left:108px;top:366.94px;font-size:12px;color:#000;letter-spacing:-0.359px;">Views</div><svg style="left:72px;top:388px" width="9" height="9" viewBox="0 0 9 9"><rect x="0.5" y="0.5" width="8" height="8" rx="1" fill="url(#gbox)" stroke="#8f8f8f" stroke-width="1"/><path d="M2.2 4.5 H6.8" stroke="#2c3f90" stroke-width="1.1"/><path d="M4.5 2.2 V6.8" stroke="#2c3f90" stroke-width="1.1"/></svg><svg style="left:87px;top:385px" width="15" height="12" viewBox="0 0 15 12"><path d="M0.5 2.5 V1 Q0.5 0.5 1 0.5 H5.5 Q6 0.5 6.5 1.5 L7 2.5Z" fill="#f3e3a0" stroke="#a89468" stroke-width="1"/><rect x="0.5" y="2.5" width="14" height="9" fill="url(#gfold)" stroke="#9a8250" stroke-width="1"/><path d="M14.5 3 V11.5 H1" fill="none" stroke="#4a3a10" stroke-width="1"/></svg><div class="t" style="left:108px;top:384.94px;font-size:12px;color:#000;letter-spacing:-0.152px;">Synonyms</div><svg style="left:72px;top:406px" width="9" height="9" viewBox="0 0 9 9"><rect x="0.5" y="0.5" width="8" height="8" rx="1" fill="url(#gbox)" stroke="#8f8f8f" stroke-width="1"/><path d="M2.2 4.5 H6.8" stroke="#2c3f90" stroke-width="1.1"/><path d="M4.5 2.2 V6.8" stroke="#2c3f90" stroke-width="1.1"/></svg><svg style="left:87px;top:403px" width="15" height="12" viewBox="0 0 15 12"><path d="M0.5 2.5 V1 Q0.5 0.5 1 0.5 H5.5 Q6 0.5 6.5 1.5 L7 2.5Z" fill="#f3e3a0" stroke="#a89468" stroke-width="1"/><rect x="0.5" y="2.5" width="14" height="9" fill="url(#gfold)" stroke="#9a8250" stroke-width="1"/><path d="M14.5 3 V11.5 H1" fill="none" stroke="#4a3a10" stroke-width="1"/></svg><div class="t" style="left:108px;top:402.94px;font-size:12px;color:#000;letter-spacing:0.174px;">Programmability</div><svg style="left:72px;top:424px" width="9" height="9" viewBox="0 0 9 9"><rect x="0.5" y="0.5" width="8" height="8" rx="1" fill="url(#gbox)" stroke="#8f8f8f" stroke-width="1"/><path d="M2.2 4.5 H6.8" stroke="#2c3f90" stroke-width="1.1"/><path d="M4.5 2.2 V6.8" stroke="#2c3f90" stroke-width="1.1"/></svg><svg style="left:87px;top:421px" width="15" height="12" viewBox="0 0 15 12"><path d="M0.5 2.5 V1 Q0.5 0.5 1 0.5 H5.5 Q6 0.5 6.5 1.5 L7 2.5Z" fill="#f3e3a0" stroke="#a89468" stroke-width="1"/><rect x="0.5" y="2.5" width="14" height="9" fill="url(#gfold)" stroke="#9a8250" stroke-width="1"/><path d="M14.5 3 V11.5 H1" fill="none" stroke="#4a3a10" stroke-width="1"/></svg><div class="t" style="left:108px;top:420.94px;font-size:12px;color:#000;letter-spacing:-0.342px;">Service Broker</div><svg style="left:72px;top:442px" width="9" height="9" viewBox="0 0 9 9"><rect x="0.5" y="0.5" width="8" height="8" rx="1" fill="url(#gbox)" stroke="#8f8f8f" stroke-width="1"/><path d="M2.2 4.5 H6.8" stroke="#2c3f90" stroke-width="1.1"/><path d="M4.5 2.2 V6.8" stroke="#2c3f90" stroke-width="1.1"/></svg><svg style="left:87px;top:439px" width="15" height="12" viewBox="0 0 15 12"><path d="M0.5 2.5 V1 Q0.5 0.5 1 0.5 H5.5 Q6 0.5 6.5 1.5 L7 2.5Z" fill="#f3e3a0" stroke="#a89468" stroke-width="1"/><rect x="0.5" y="2.5" width="14" height="9" fill="url(#gfold)" stroke="#9a8250" stroke-width="1"/><path d="M14.5 3 V11.5 H1" fill="none" stroke="#4a3a10" stroke-width="1"/></svg><div class="t" style="left:108px;top:438.94px;font-size:12px;color:#000;letter-spacing:-0.261px;">Storage</div><svg style="left:72px;top:460px" width="9" height="9" viewBox="0 0 9 9"><rect x="0.5" y="0.5" width="8" height="8" rx="1" fill="url(#gbox)" stroke="#8f8f8f" stroke-width="1"/><path d="M2.2 4.5 H6.8" stroke="#2c3f90" stroke-width="1.1"/><path d="M4.5 2.2 V6.8" stroke="#2c3f90" stroke-width="1.1"/></svg><svg style="left:87px;top:457px" width="15" height="12" viewBox="0 0 15 12"><path d="M0.5 2.5 V1 Q0.5 0.5 1 0.5 H5.5 Q6 0.5 6.5 1.5 L7 2.5Z" fill="#f3e3a0" stroke="#a89468" stroke-width="1"/><rect x="0.5" y="2.5" width="14" height="9" fill="url(#gfold)" stroke="#9a8250" stroke-width="1"/><path d="M14.5 3 V11.5 H1" fill="none" stroke="#4a3a10" stroke-width="1"/></svg><div class="t" style="left:108px;top:456.94px;font-size:12px;color:#000;letter-spacing:-0.168px;">Security</div><svg style="left:34px;top:478px" width="9" height="9" viewBox="0 0 9 9"><rect x="0.5" y="0.5" width="8" height="8" rx="1" fill="url(#gbox)" stroke="#8f8f8f" stroke-width="1"/><path d="M2.2 4.5 H6.8" stroke="#2c3f90" stroke-width="1.1"/><path d="M4.5 2.2 V6.8" stroke="#2c3f90" stroke-width="1.1"/></svg><svg style="left:49px;top:475px" width="15" height="12" viewBox="0 0 15 12"><path d="M0.5 2.5 V1 Q0.5 0.5 1 0.5 H5.5 Q6 0.5 6.5 1.5 L7 2.5Z" fill="#f3e3a0" stroke="#a89468" stroke-width="1"/><rect x="0.5" y="2.5" width="14" height="9" fill="url(#gfold)" stroke="#9a8250" stroke-width="1"/><path d="M14.5 3 V11.5 H1" fill="none" stroke="#4a3a10" stroke-width="1"/></svg><div class="t" style="left:70px;top:474.94px;font-size:12px;color:#000;letter-spacing:-0.168px;">Security</div><svg style="left:34px;top:496px" width="9" height="9" viewBox="0 0 9 9"><rect x="0.5" y="0.5" width="8" height="8" rx="1" fill="url(#gbox)" stroke="#8f8f8f" stroke-width="1"/><path d="M2.2 4.5 H6.8" stroke="#2c3f90" stroke-width="1.1"/><path d="M4.5 2.2 V6.8" stroke="#2c3f90" stroke-width="1.1"/></svg><svg style="left:49px;top:493px" width="15" height="12" viewBox="0 0 15 12"><path d="M0.5 2.5 V1 Q0.5 0.5 1 0.5 H5.5 Q6 0.5 6.5 1.5 L7 2.5Z" fill="#f3e3a0" stroke="#a89468" stroke-width="1"/><rect x="0.5" y="2.5" width="14" height="9" fill="url(#gfold)" stroke="#9a8250" stroke-width="1"/><path d="M14.5 3 V11.5 H1" fill="none" stroke="#4a3a10" stroke-width="1"/></svg><div class="t" style="left:70px;top:492.94px;font-size:12px;color:#000;letter-spacing:-0.304px;">Server Objects</div><svg style="left:34px;top:514px" width="9" height="9" viewBox="0 0 9 9"><rect x="0.5" y="0.5" width="8" height="8" rx="1" fill="url(#gbox)" stroke="#8f8f8f" stroke-width="1"/><path d="M2.2 4.5 H6.8" stroke="#2c3f90" stroke-width="1.1"/><path d="M4.5 2.2 V6.8" stroke="#2c3f90" stroke-width="1.1"/></svg><svg style="left:49px;top:511px" width="15" height="12" viewBox="0 0 15 12"><path d="M0.5 2.5 V1 Q0.5 0.5 1 0.5 H5.5 Q6 0.5 6.5 1.5 L7 2.5Z" fill="#f3e3a0" stroke="#a89468" stroke-width="1"/><rect x="0.5" y="2.5" width="14" height="9" fill="url(#gfold)" stroke="#9a8250" stroke-width="1"/><path d="M14.5 3 V11.5 H1" fill="none" stroke="#4a3a10" stroke-width="1"/></svg><div class="t" style="left:70px;top:510.94px;font-size:12px;color:#000;letter-spacing:-0.060px;">Replication</div><svg style="left:34px;top:532px" width="9" height="9" viewBox="0 0 9 9"><rect x="0.5" y="0.5" width="8" height="8" rx="1" fill="url(#gbox)" stroke="#8f8f8f" stroke-width="1"/><path d="M2.2 4.5 H6.8" stroke="#2c3f90" stroke-width="1.1"/><path d="M4.5 2.2 V6.8" stroke="#2c3f90" stroke-width="1.1"/></svg><svg style="left:49px;top:529px" width="15" height="12" viewBox="0 0 15 12"><path d="M0.5 2.5 V1 Q0.5 0.5 1 0.5 H5.5 Q6 0.5 6.5 1.5 L7 2.5Z" fill="#f3e3a0" stroke="#a89468" stroke-width="1"/><rect x="0.5" y="2.5" width="14" height="9" fill="url(#gfold)" stroke="#9a8250" stroke-width="1"/><path d="M14.5 3 V11.5 H1" fill="none" stroke="#4a3a10" stroke-width="1"/></svg><div class="t" style="left:70px;top:528.94px;font-size:12px;color:#000;letter-spacing:0.106px;">Management</div>
<div class="a" style="left:6px;top:659px;width:253px;height:18px;background:#f0f0f0"></div>
<div class="a" style="left:6px;top:147px;width:1px;height:530px;background:#8e939b"></div>
<div class="a" style="left:258px;top:147px;width:1px;height:530px;background:#8e939b"></div>
<div class="a" style="left:25px;top:659px;width:113px;height:16px;background:#cacaca"></div>
<svg style="left:13px;top:663px" width="6" height="10" viewBox="0 0 6 10"><path d="M5 0.5 L1 5 L5 9.5" fill="none" stroke="#555" stroke-width="1.5"/></svg>
<svg style="left:246px;top:663px" width="6" height="10" viewBox="0 0 6 10"><path d="M1 0.5 L5 5 L1 9.5" fill="none" stroke="#555" stroke-width="1.5"/></svg>
<div class="a" style="left:259px;top:95px;width:6px;height:582px;background-color:#2c3d5b;background-image:conic-gradient(at 1px 1px,transparent 75%,#3d5275 0),conic-gradient(at 1px 1px,transparent 75%,#3d5275 0),conic-gradient(at 1px 1px,transparent 75%,#24324e 0),conic-gradient(at 1px 1px,transparent 75%,#24324e 0);background-size:4px 4px;background-position:0 1px,2px 3px,2px 2px,0 0"></div>
<div class="t" style="left:270px;top:105.94px;font-size:12px;color:#fff;letter-spacing:-0.329px;">DESKTOP-DHSC4N7\S...- dbo.ogrenciler</div>
<div class="a" style="left:507px;top:101px;width:248px;height:20px;background:linear-gradient(#fffbeb,#fff0c4 60%,#ffe9aa);border-radius:2px 2px 0 0"></div>
<div class="t" style="left:511px;top:105.94px;font-size:12px;color:#000;letter-spacing:-0.249px;">SQLQuery1.sql - D...DHSC4N7\Ufuk (52))*</div>
<svg style="left:740px;top:107px" width="10" height="10" viewBox="0 0 10 10"><path d="M1 1 L9 9 M9 1 L1 9" stroke="#6a6048" stroke-width="1.4"/></svg>
<div class="a" style="left:265px;top:121px;width:972px;height:4px;background:#ffe8a6"></div>
<div class="a" style="left:265px;top:125px;width:972px;height:258px;background:#fff"></div>
<div class="a" style="left:265px;top:125px;width:25px;height:258px;background:#f0f0f0"></div>
<div class="a" style="left:293px;top:125px;width:8px;height:75px;background:#fee35a"></div>
<svg style="left:305px;top:131px" width="13" height="70" viewBox="0 0 13 70"><rect x="0.5" y="0.5" width="12" height="12" fill="#fff" stroke="#a0a0a0"/><path d="M3 6.5 H10" stroke="#333" stroke-width="1.2"/><path d="M7.5 13 V68.5 H13" fill="none" stroke="#a0a0a0" stroke-width="1"/></svg>
<div class="t" style="left:320px;top:127.95px;font-size:18.5px;color:#000;font-family:'Liberation Mono',monospace;letter-spacing:-0.65px"><span style="color:#0000ff">use</span><span style="color:#000"> yazilimbilisim</span></div>
<div class="t" style="left:320px;top:151.95px;font-size:18.5px;color:#000;font-family:'Liberation Mono',monospace;letter-spacing:-0.65px"><span style="color:#0000ff">insert</span><span style="color:#000"> </span><span style="color:#0000ff">into</span><span style="color:#000"> ogrenciler</span><span style="color:#808080">(</span><span style="color:#000">ogrAd</span><span style="color:#808080">,</span><span style="color:#000">ogrSoyad</span><span style="color:#808080">)</span><span style="color:#000"> </span><span style="color:#0000ff">values</span><span style="color:#808080">(</span><span style="color:#ff0000">'ali'</span><span style="color:#808080">,</span><span style="color:#ff0000">'can'</span><span style="color:#808080">),(</span><span style="color:#ff0000">'gül'</span><span style="color:#808080">,</span><span style="color:#ff0000">'çimen'</span><span style="color:#808080">),(</span><span style="color:#ff0000">'ali'</span><span style="color:#808080">,</span><span style="color:#ff0000">'can'</span><span style="color:#808080">)</span></div>
<div class="t" style="left:320px;top:176.95px;font-size:18.5px;color:#000;font-family:'Liberation Mono',monospace;letter-spacing:-0.65px"><span style="color:#0000ff">select</span><span style="color:#000"> </span><span style="color:#808080">*</span><span style="color:#000"> </span><span style="color:#0000ff">from</span><span style="color:#000"> ogrenciler</span></div>
<div class="a" style="left:265px;top:383px;width:972px;height:44px;background:#f0f0f0"></div>
<div class="a" style="left:265px;top:383px;width:59px;height:14px;background:#fff"></div>
<div class="a" style="left:265px;top:397px;width:59px;height:3px;background:#e4e4e4"></div>
<div class="t" style="left:269px;top:385.40px;font-size:11.5px;color:#000;letter-spacing:-0.521px;">146 %</div>
<svg style="left:317px;top:390px" width="6" height="4" viewBox="0 0 6 4"><path d="M0 0 H6 L3 3.5Z" fill="#222"/></svg>
<svg style="left:331px;top:387px" width="6" height="10" viewBox="0 0 6 10"><path d="M5 0.5 L1 5 L5 9.5" fill="none" stroke="#9a9a9a" stroke-width="1.2"/></svg>
<div class="a" style="left:342px;top:383px;width:787px;height:17px;background:#cacaca"></div>
<div class="a" style="left:265px;top:404px;width:72px;height:23px;background:#fff;border-top:1px solid #d9d9d9;border-right:1px solid #d9d9d9"></div>
<div class="a" style="left:337px;top:406px;width:79px;height:20px;background:#ececec;border:1px solid #d6d6d6;border-left:none"></div>
<svg style="left:274px;top:408px" width="14" height="13" viewBox="0 0 14 13"><rect x="0.5" y="0.5" width="13" height="12" fill="#f4f6fb" stroke="#445"/><rect x="1" y="1" width="12" height="2.5" fill="#6a8ad8"/><path d="M1 6.5 H13 M1 9.5 H13 M5 3.5 V12 M9 3.5 V12" stroke="#9aaad0"/></svg>
<div class="t" style="left:295px;top:408.44px;font-size:12px;color:#000;letter-spacing:-0.859px;">Results</div>
<svg style="left:343px;top:407px" width="15" height="16" viewBox="0 0 15 16"><rect x="0.5" y="0.5" width="8" height="14" fill="#eef0f4" stroke="#556"/><path d="M2 3h5M2 5h5" stroke="#6a8ad8"/><rect x="6.5" y="6.5" width="8" height="9" fill="#fff" stroke="#556"/><path d="M8 9h1M8 11h1M8 13h1" stroke="#e08020"/><path d="M10 9h3M10 11h3M10 13h3" stroke="#30a040"/></svg>
<div class="t" style="left:364px;top:410.44px;font-size:12px;color:#000;letter-spacing:-0.961px;">Messages</div>
<div class="a" style="left:265px;top:427px;width:972px;height:224px;background:#fff"></div>
<div class="a" style="left:337px;top:426px;width:900px;height:1px;background:#fff"></div>
<div class="a" style="left:269px;top:427px;width:968px;height:1px;background:#a4a6b0"></div>
<div class="a" style="left:269px;top:427px;width:1px;height:220px;background:#a4a6b0"></div>
<div class="a" style="left:269px;top:646px;width:968px;height:1px;background:#a4a6b0"></div>
<div class="a" style="left:265px;top:647px;width:972px;height:5px;background:#fff"></div>
<div class="a" style="left:265px;top:649px;width:972px;height:1px;background:#d9d9d9"></div>
<div class="a" style="left:301px;top:428px;width:1px;height:18px;background:#e4e4e4"></div><div class="a" style="left:324px;top:428px;width:1px;height:18px;background:#e4e4e4"></div><div class="a" style="left:367px;top:428px;width:1px;height:18px;background:#e4e4e4"></div><div class="a" style="left:429px;top:428px;width:1px;height:18px;background:#e4e4e4"></div><div class="a" style="left:270px;top:446px;width:160px;height:1px;background:#e4e4e4"></div><div class="a" style="left:270px;top:465px;width:160px;height:1px;background:#e4e4e4"></div><div class="a" style="left:270px;top:484px;width:160px;height:1px;background:#e4e4e4"></div><div class="a" style="left:270px;top:503px;width:160px;height:1px;background:#e4e4e4"></div><div class="a" style="left:301px;top:446px;width:1px;height:57px;background:#e4e4e4"></div><div class="a" style="left:324px;top:446px;width:1px;height:57px;background:#e4e4e4"></div><div class="a" style="left:367px;top:446px;width:1px;height:57px;background:#e4e4e4"></div><div class="a" style="left:429px;top:446px;width:1px;height:57px;background:#e4e4e4"></div><div class="a" style="left:302px;top:446px;width:23px;height:20px;background:#e9edf3;border:1px dotted #222"></div>
<div class="t" style="left:306px;top:430.94px;font-size:12px;color:#000;letter-spacing:-0.370px;">id</div>
<div class="t" style="left:329px;top:430.94px;font-size:12px;color:#000;letter-spacing:-0.804px;">ogrAd</div>
<div class="t" style="left:372px;top:430.94px;font-size:12px;color:#000;letter-spacing:-0.796px;">ogrSoyad</div>
<div class="t" style="left:276px;top:450.44px;font-size:12px;color:#000;letter-spacing:-0.673px;">1</div>
<div class="t" style="left:309px;top:450.44px;font-size:12px;color:#000;letter-spacing:-0.673px;">1</div>
<div class="t" style="left:331px;top:450.44px;font-size:12px;color:#000;letter-spacing:-0.502px;">ali</div>
<div class="t" style="left:374px;top:450.44px;font-size:12px;color:#000;letter-spacing:-0.615px;">can</div>
<div class="t" style="left:276px;top:469.44px;font-size:12px;color:#000;letter-spacing:-0.673px;">2</div>
<div class="t" style="left:309px;top:469.44px;font-size:12px;color:#000;letter-spacing:-0.673px;">2</div>
<div class="t" style="left:331px;top:469.44px;font-size:12px;color:#000;letter-spacing:-0.804px;">gül</div>
<div class="t" style="left:374px;top:469.44px;font-size:12px;color:#000;letter-spacing:-0.802px;">çimen</div>
<div class="t" style="left:276px;top:488.44px;font-size:12px;color:#000;letter-spacing:-0.673px;">3</div>
<div class="t" style="left:309px;top:488.44px;font-size:12px;color:#000;letter-spacing:-0.673px;">3</div>
<div class="t" style="left:331px;top:488.44px;font-size:12px;color:#000;letter-spacing:-0.502px;">ali</div>
<div class="t" style="left:374px;top:488.44px;font-size:12px;color:#000;letter-spacing:-0.615px;">can</div>
<div class="a" style="left:265px;top:652px;width:972px;height:22px;background:#efe58a"></div>
<div class="a" style="left:265px;top:674px;width:972px;height:3px;background:#fde4a0"></div>
<svg style="left:268px;top:655px" width="16" height="16" viewBox="0 0 16 16"><circle cx="8" cy="8" r="7.5" fill="url(#gok)" stroke="#2a6a2a" stroke-width="0.8"/><path d="M4 8.5 L7 11.2 L12.2 5" fill="none" stroke="#fff" stroke-width="2"/></svg>
<div class="t" style="left:289px;top:657.44px;font-size:12px;color:#000;letter-spacing:-0.167px;">Query executed successfully.</div>
<div class="a" style="left:774px;top:656px;width:1px;height:16px;background:#c8c090"></div>
<div class="a" style="left:775px;top:656px;width:1px;height:16px;background:#fffbe0"></div>
<div class="a" style="left:970px;top:656px;width:1px;height:16px;background:#c8c090"></div>
<div class="a" style="left:971px;top:656px;width:1px;height:16px;background:#fffbe0"></div>
<div class="a" style="left:1141px;top:656px;width:1px;height:16px;background:#c8c090"></div>
<div class="a" style="left:1142px;top:656px;width:1px;height:16px;background:#fffbe0"></div>
<div class="a" style="left:1224px;top:656px;width:1px;height:16px;background:#c8c090"></div>
<div class="a" style="left:1225px;top:656px;width:1px;height:16px;background:#fffbe0"></div>
<div class="t" style="left:779px;top:657.44px;font-size:12px;color:#000;letter-spacing:-0.662px;">DESKTOP-DHSC4N7\SQL_2014 (1...</div>
<div class="t" style="left:975px;top:657.44px;font-size:12px;color:#000;letter-spacing:-0.473px;">DESKTOP-DHSC4N7\Ufuk (52)</div>
<div class="t" style="left:1147px;top:657.44px;font-size:12px;color:#000;letter-spacing:0.071px;">yazilimbilisim</div>
<div class="t" style="left:1228px;top:657.44px;font-size:12px;color:#000;">0</div>
</body></html>
